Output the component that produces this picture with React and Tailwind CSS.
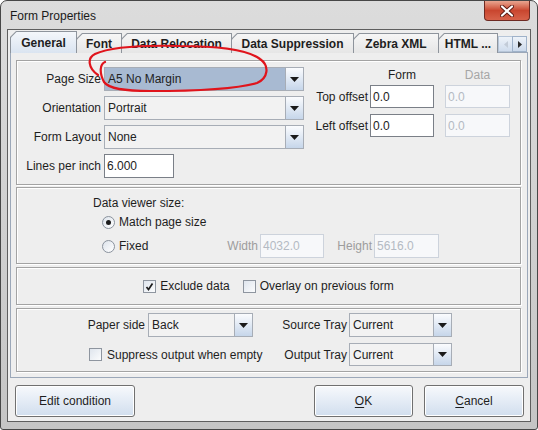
import React from 'react';

// Java "Windows" look: combo, text field, checkbox, radio, button
const Combo = ({ value, width, selected }) => (
  <div className={`flex h-full ${width}`}>
    <div
      className={`flex-1 flex items-center pl-[3px] border border-[#a7adb6] text-[#222] ${
        selected ? 'bg-[#a8bad2]' : 'bg-[#f2f2f2]'
      }`}
    >
      {value}
    </div>
    <div className="w-[19px] -ml-px flex items-center justify-center border border-[#a7adb6] bg-linear-to-b from-[#fbfcfe] to-[#c6d6ea]">
      <svg width="9" height="5" viewBox="0 0 9 5">
        <polygon points="0,0 9,0 4.5,5" fill="#1a1a1a" />
      </svg>
    </div>
  </div>
);

const Field = ({ value, width, disabled }) => (
  <div
    className={`h-full flex items-center pl-[2px] border ${width} ${
      disabled ? 'border-[#cdd3dc] bg-[#f7f8fa] text-[#b4bac3]' : 'border-[#7a7f87] bg-white text-[#222]'
    }`}
  >
    {value}
  </div>
);

const Check = ({ checked }) => (
  <div className="w-[13px] h-[13px] border border-[#8e959f] bg-linear-to-br from-[#dfe5ed] to-[#fbfcfd] flex items-center justify-center">
    {checked && (
      <svg width="11" height="11" viewBox="0 0 11 11">
        <path d="M2.5 6 L4.5 8.5 L8.5 2.5" stroke="#1e1e1e" strokeWidth="1.7" fill="none" />
      </svg>
    )}
  </div>
);

const Radio = ({ on }) => (
  <div className="w-[13px] h-[13px] rounded-full border border-[#8a929d] bg-linear-to-br from-[#dde3eb] to-[#ffffff] flex items-center justify-center">
    {on && <div className="w-[5px] h-[5px] rounded-full bg-[#1c1c1c]" />}
  </div>
);

const Btn = ({ children, width }) => (
  <div
    className={`h-full ${width} flex items-center justify-center rounded-[3px] border border-[#707070] bg-linear-to-b from-[#f7f9fc] to-[#d1deee] shadow-[inset_0_0_0_1px_#ffffff] text-[#1e1e1e]`}
  >
    {children}
  </div>
);

const Tab = ({ label, width, active }) => (
  <div
    className={`${width} -ml-px first:ml-0 bg-[#8e949c] pt-px px-px [clip-path:polygon(6px_0,100%_0,100%_100%,0_100%,0_6px)] ${
      active ? 'h-[22px] relative z-10' : 'h-[20px]'
    }`}
  >
    <div
      className={`h-full flex items-center justify-center font-bold text-[#1e1e1e] [clip-path:polygon(5.5px_0,100%_0,100%_100%,0_100%,0_5.5px)] ${
        active ? 'bg-linear-to-b from-[#f4f7fb] to-[#dae4f0]' : 'bg-linear-to-b from-[#f6f6f6] to-[#e6e6e6]'
      }`}
    >
      {label}
    </div>
  </div>
);

const Section = ({ className, children }) => (
  <div className={`border border-[#a3a3a3] shadow-[inset_1px_1px_0_#ffffff,1px_1px_0_#ffffff] ${className}`}>
    {children}
  </div>
);

export default function App() {
  return (
    <div className="relative w-[538px] h-[430px] bg-white text-[12px] leading-none font-['Liberation_Sans',Arial,sans-serif]">
      <div className="w-[538px] h-[430px] rounded-t-[7px] rounded-b-[3px] border border-[#474747] bg-linear-to-b from-[#dcdcdc] to-[#c5c5c5] flex flex-col">
        {/* title bar */}
        <div className="h-[28px] relative">
          <div className="pl-[9px] pt-[9px] text-[#1a1a1a]">Form Properties</div>
          <div className="absolute right-[7px] top-0 w-[46px] h-[20px] rounded-b-[4px] border border-t-0 border-[#6e2a22] bg-linear-to-b from-[#e8a590] via-[#c9462f] to-[#d7624a] flex items-center justify-center">
            <svg width="14" height="12" viewBox="0 0 14 12">
              <path d="M2 1.5 L12 10.5 M12 1.5 L2 10.5" stroke="#5a1a12" strokeWidth="4" strokeLinecap="round" />
              <path d="M2 1.5 L12 10.5 M12 1.5 L2 10.5" stroke="#ffffff" strokeWidth="2.2" strokeLinecap="round" />
            </svg>
          </div>
        </div>

        {/* client area */}
        <div className="mx-[6px] mb-[7px] flex-1 border border-[#5e5e5e] bg-[#eeeeee] flex flex-col">
          {/* tabs */}
          <div className="mt-[1px] ml-[2px] h-[22px] flex items-end">
            <Tab label="General" width="w-[67px]" active />
            <Tab label="Font" width="w-[46px]" />
            <Tab label="Data Relocation" width="w-[111px]" />
            <Tab label="Data Suppression" width="w-[123px]" />
            <Tab label="Zebra XML" width="w-[86px]" />
            <Tab label="HTML ..." width="w-[60px]" />
            <div className="flex self-end mb-[1px] h-[16px]">
              <div className="w-[15px] border border-[#b7c6d8] bg-linear-to-b from-[#eef3f9] to-[#cfdced] flex items-center justify-center">
                <svg width="4" height="7" viewBox="0 0 4 7">
                  <polygon points="4,0 4,7 0,3.5" fill="#c3ccd8" />
                </svg>
              </div>
              <div className="w-[15px] -ml-px border border-[#9fb2c9] bg-linear-to-b from-[#eef3f9] to-[#cbd9eb] flex items-center justify-center">
                <svg width="4" height="7" viewBox="0 0 4 7">
                  <polygon points="0,0 0,7 4,3.5" fill="#2a2a2a" />
                </svg>
              </div>
            </div>
          </div>

          {/* tab panel */}
          <div className="-mt-px mx-[2px] h-[326px] border border-[#9ba7b8] pl-[5px] pr-[6px] pt-[7px] flex flex-col">
            {/* page settings */}
            <Section className="h-[125px] flex">
              <div className="pt-[6px] flex flex-col gap-[5px]">
                <div className="h-[24px] flex items-center gap-[3px]">
                  <div className="w-[84px] text-right text-[#1e1e1e]">Page Size</div>
                  <Combo value="A5 No Margin" width="w-[200px]" selected />
                </div>
                <div className="h-[24px] flex items-center gap-[3px]">
                  <div className="w-[84px] text-right text-[#1e1e1e]">Orientation</div>
                  <Combo value="Portrait" width="w-[200px]" />
                </div>
                <div className="h-[24px] flex items-center gap-[3px]">
                  <div className="w-[84px] text-right text-[#1e1e1e]">Form Layout</div>
                  <Combo value="None" width="w-[200px]" />
                </div>
                <div className="h-[24px] flex items-center gap-[3px]">
                  <div className="w-[84px] text-right text-[#1e1e1e]">Lines per inch</div>
                  <Field value="6.000" width="w-[70px]" />
                </div>
              </div>
              <div className="ml-[6px] pt-[8px] flex flex-col">
                <div className="h-[16px] flex">
                  <div className="w-[60px]" />
                  <div className="w-[64px] text-center text-[#1e1e1e]">Form</div>
                  <div className="w-[11px]" />
                  <div className="w-[65px] text-center text-[#a6a6a6]">Data</div>
                </div>
                <div className="h-[23px] flex items-center">
                  <div className="w-[58px] mr-[2px] text-right text-[#1e1e1e]">Top offset</div>
                  <Field value="0.0" width="w-[64px]" />
                  <div className="w-[11px]" />
                  <Field value="0.0" width="w-[65px]" disabled />
                </div>
                <div className="mt-[6px] h-[23px] flex items-center">
                  <div className="w-[58px] mr-[2px] text-right text-[#1e1e1e]">Left offset</div>
                  <Field value="0.0" width="w-[64px]" />
                  <div className="w-[11px]" />
                  <Field value="0.0" width="w-[65px]" disabled />
                </div>
              </div>
            </Section>

            {/* data viewer size */}
            <Section className="mt-[2px] h-[77px] flex flex-col">
              <div className="ml-[76px] mt-[7px] h-[15px] flex items-center text-[#1e1e1e]">Data viewer size:</div>
              <div className="ml-[85px] mt-[4px] h-[16px] flex items-center gap-[4px] text-[#1e1e1e]">
                <Radio on />
                <span>Match page size</span>
              </div>
              <div className="ml-[85px] mt-[4px] h-[24px] flex items-center">
                <div className="w-[120px] flex items-center gap-[4px] text-[#1e1e1e]">
                  <Radio />
                  <span>Fixed</span>
                </div>
                <div className="w-[36px] mr-[2px] text-right text-[#9d9d9d]">Width</div>
                <Field value="4032.0" width="w-[64px]" disabled />
                <div className="w-[48px] mr-[2px] text-right text-[#9d9d9d]">Height</div>
                <Field value="5616.0" width="w-[65px]" disabled />
              </div>
            </Section>

            {/* data options */}
            <Section className="mt-[3px] h-[38px] flex items-center justify-center gap-[13px] text-[#1e1e1e]">
              <div className="flex items-center gap-[4px]">
                <Check checked />
                <span>Exclude data</span>
              </div>
              <div className="flex items-center gap-[4px]">
                <Check />
                <span>Overlay on previous form</span>
              </div>
            </Section>

            {/* printer */}
            <Section className="mt-[3px] h-[64px] flex flex-col text-[#1e1e1e]">
              <div className="ml-[68px] mt-[4px] h-[24px] flex items-center">
                <div className="w-[60px] mr-[3px] text-right">Paper side</div>
                <Combo value="Back" width="w-[105px]" />
                <div className="w-[94px] mr-[2px] text-right">Source Tray</div>
                <Combo value="Current" width="w-[103px]" />
              </div>
              <div className="ml-[72px] mt-[6px] h-[23px] flex items-center">
                <div className="w-[179px] flex items-center gap-[5px]">
                  <Check />
                  <span className="whitespace-nowrap">Suppress output when empty</span>
                </div>
                <div className="w-[79px] mr-[2px] text-right">Output Tray</div>
                <Combo value="Current" width="w-[103px]" />
              </div>
            </Section>
          </div>

          {/* buttons */}
          <div className="mt-[7px] h-[32px] flex px-[6px]">
            <div className="ml-px">
              <Btn width="w-[120px]">Edit condition</Btn>
            </div>
            <div className="ml-auto flex gap-[11px] h-full">
              <Btn width="w-[99px]">
                <span className="underline underline-offset-2">O</span>K
              </Btn>
              <Btn width="w-[100px]">
                <span className="underline underline-offset-2">C</span>ancel
              </Btn>
            </div>
          </div>
        </div>
      </div>

      {/* red hand-drawn annotation */}
      <svg className="absolute left-0 top-0 pointer-events-none" width="538" height="430" viewBox="0 0 538 430">
        <path
          d="M105 62 C100 64, 99 72, 104 82 C109 89, 125 91, 150 91 C190 91, 235 89, 257 83 C268 78, 270 66, 260 59 C248 50, 220 46, 180 46 C140 45, 110 47, 95 54 C87 58, 88 68, 98 75"
          stroke="#e0141c"
          strokeWidth="2.2"
          fill="none"
          strokeLinecap="round"
        />
      </svg>
    </div>
  );
}
